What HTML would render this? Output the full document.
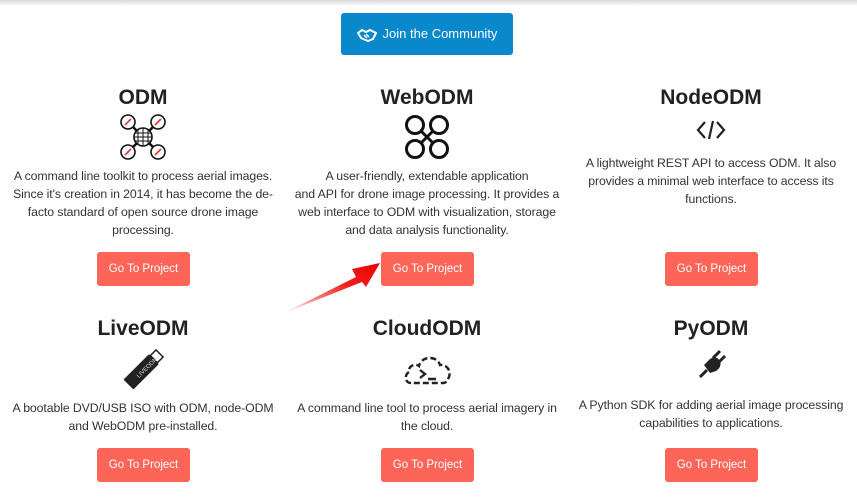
<!DOCTYPE html>
<html><head><style>
body{margin:0;width:857px;height:503px;background:#fff;font-family:"Liberation Sans",sans-serif;position:relative;overflow:hidden;color:#2a2a2a}
.shadow{position:absolute;left:0;top:0;width:857px;height:6px;background:linear-gradient(#d8d8d8,#fff)}
.join{position:absolute;left:341px;top:13px;width:172px;height:42px;background:#0a88cc;border-radius:3px;color:#fff;font-size:13px;line-height:42px;text-align:center}
.t{position:absolute;width:284px;text-align:center;font-weight:bold;font-size:21px;color:#222}
.p{position:absolute;width:284px;text-align:center;font-size:12.3px;line-height:18px;color:#333;letter-spacing:-0.1px}
.b{position:absolute;width:93px;height:34px;background:#fd6558;border-radius:3px;color:#fff;font-size:11.5px;line-height:34px;text-align:center}
svg{position:absolute}
</style></head><body>
<div class="shadow"></div>
<div class="join"><svg style="position:relative;vertical-align:middle;margin-right:6px" width="20" height="14" viewBox="0 0 20 14"><path d="M1 5 L5 2 L9 4 L13 2 L19 5 L16 11 L11 13 L4 10 Z" fill="none" stroke="#fff" stroke-width="2"/><path d="M7 7 l3 3 M9 6 l3 3" stroke="#fff" stroke-width="1.5"/></svg>Join the Community</div>

<div class="t" style="left:1px;top:86px">ODM</div>
<div class="t" style="left:285px;top:86px">WebODM</div>
<div class="t" style="left:569px;top:86px">NodeODM</div>

<svg style="left:119px;top:113px" width="48" height="48" viewBox="0 0 48 48">
<g fill="#fff" stroke="#111" stroke-width="1.6"><circle cx="9" cy="9" r="7"/><circle cx="39" cy="9" r="7"/><circle cx="9" cy="39" r="7"/><circle cx="39" cy="39" r="7"/></g>
<g stroke="#e33" stroke-width="1.6"><path d="M6 12L12 6M36 12L42 6M6 42L12 36M36 42L42 36"/></g>
<path d="M14 14L34 34M34 14L14 34" stroke="#111" stroke-width="2.5"/>
<circle cx="24" cy="24" r="9" fill="#fff" stroke="#111" stroke-width="1.6"/>
<path d="M15 24H33M24 15V33M19 17V31M29 17V31M16 20H32M16 28H32" stroke="#111" stroke-width="1"/>
</svg>
<svg style="left:404px;top:114px" width="46" height="46" viewBox="0 0 46 46" fill="none" stroke="#111" stroke-width="3"><circle cx="11" cy="11" r="8.5"/><circle cx="35" cy="11" r="8.5"/><circle cx="11" cy="35" r="8.5"/><circle cx="35" cy="35" r="8.5"/><path d="M17 17L29 29M29 17L17 29"/></svg>
<svg style="left:696px;top:119px" width="30" height="22" viewBox="0 0 30 22" fill="none" stroke="#222" stroke-width="2.2"><path d="M9 3L2 11L9 19M21 3L28 11L21 19M17 2L13 20"/></svg>

<div class="p" style="left:1px;top:167px">A command line toolkit to process aerial images.<br>Since it's creation in 2014, it has become the de-<br>facto standard of open source drone image<br>processing.</div>
<div class="p" style="left:285px;top:167px">A user-friendly, extendable application<br>and API for drone image processing. It provides a<br>web interface to ODM with visualization, storage<br>and data analysis functionality.</div>
<div class="p" style="left:569px;top:154px">A lightweight REST API to access ODM. It also<br>provides a minimal web interface to access its<br>functions.</div>

<div class="b" style="left:97px;top:252px">Go To Project</div>
<div class="b" style="left:381px;top:252px">Go To Project</div>
<div class="b" style="left:665px;top:252px">Go To Project</div>

<svg style="left:280px;top:255px" width="110" height="60" viewBox="0 0 110 60"><defs><linearGradient id="g" x1="0" y1="1" x2="1" y2="0"><stop offset="0" stop-color="#e00" stop-opacity="0"/><stop offset="0.6" stop-color="#e22"/><stop offset="1" stop-color="#e00"/></linearGradient></defs><path d="M4 58 L76 22 L72 14 L100 8 L86 32 L82 27 Z" fill="url(#g)"/></svg>

<div class="t" style="left:1px;top:317px">LiveODM</div>
<div class="t" style="left:285px;top:317px">CloudODM</div>
<div class="t" style="left:569px;top:317px">PyODM</div>

<svg style="left:120px;top:346px" width="48" height="46" viewBox="0 0 48 46"><g transform="rotate(-45 24 23)"><rect x="2" y="16" width="36" height="14" rx="1" fill="#222"/><rect x="38" y="18" width="8" height="10" fill="#fff" stroke="#222" stroke-width="1.5"/><text x="14" y="26" font-size="6" fill="#ddd" font-family="Liberation Sans">LIVEODM</text></g></svg>
<svg style="left:403px;top:353px" width="50" height="32" viewBox="0 0 50 32" fill="none" stroke="#222" stroke-width="2.4" stroke-dasharray="6 3"><path d="M8 30C2 30 1 22 6 19C5 13 12 10 16 13C18 3 34 2 37 12C45 11 49 20 45 26C44 29 42 30 40 30Z"/><path d="M17 17L22 21L17 25M25 26H33" stroke-dasharray="none"/></svg>
<svg style="left:696px;top:347px" width="32" height="32" viewBox="0 0 32 32"><path d="M4 30L11 23" stroke="#222" stroke-width="3"/><path d="M8 18L14 12Q20 8 24 14Q26 20 20 24L14 26Z" fill="#222"/><path d="M17 11L24 4M22 16L29 9" stroke="#222" stroke-width="3"/></svg>

<div class="p" style="left:1px;top:399px">A bootable DVD/USB ISO with ODM, node-ODM<br>and WebODM pre-installed.</div>
<div class="p" style="left:285px;top:399px">A command line tool to process aerial imagery in<br>the cloud.</div>
<div class="p" style="left:569px;top:396px">A Python SDK for adding aerial image processing<br>capabilities to applications.</div>

<div class="b" style="left:97px;top:448px">Go To Project</div>
<div class="b" style="left:381px;top:448px">Go To Project</div>
<div class="b" style="left:665px;top:448px">Go To Project</div>
</body></html>
